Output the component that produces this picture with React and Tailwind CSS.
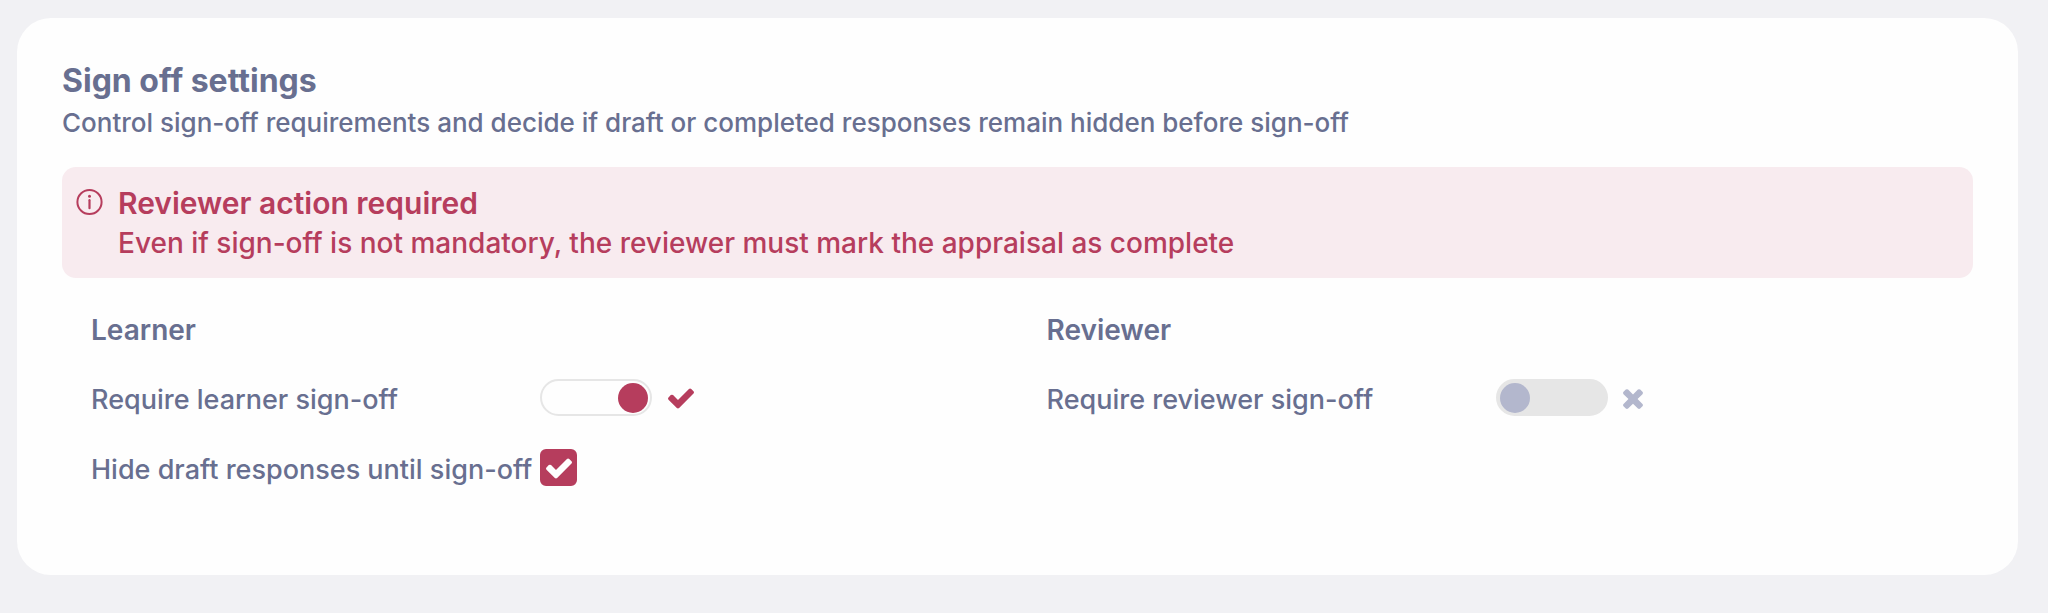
import { useState } from 'react';

const CHECK_PATH =
  'M1671 566q0 40-28 68l-724 724-136 136q-28 28-68 28t-68-28l-136-136-362-362q-28-28-28-68t28-68l136-136q28-28 68-28t68 28l294 295 656-657q28-28 68-28t68 28l136 136q28 28 28 68z';
const TIMES_PATH =
  'M1490 1322q0 40-28 68l-136 136q-28 28-68 28t-68-28l-294-294-294 294q-28 28-68 28t-68-28l-136-136q-28-28-28-68t28-68l294-294-294-294q-28-28-28-68t28-68l136-136q28-28 68-28t68 28l294 294 294-294q28-28 68-28t68 28l136 136q28 28 28 68t-28 68l-294 294 294 294q28 28 28 68z';

function Glyph({ path, className }) {
  return (
    <svg viewBox="0 0 1792 1792" fill="currentColor" aria-hidden="true" className={className}>
      <path d={path} />
    </svg>
  );
}

function InfoIcon() {
  return (
    <svg viewBox="0 0 28 28" fill="none" stroke="currentColor" aria-hidden="true" className="mt-[21px] size-7 shrink-0">
      <circle cx="13.5" cy="14" r="12.1" strokeWidth="2" />
      <path d="M13.5 12.2v8" strokeWidth="2.2" strokeLinecap="round" />
      <circle cx="13.5" cy="8.3" r="1.5" fill="currentColor" stroke="none" />
    </svg>
  );
}

function SettingRow({ id, label, children }) {
  return (
    <div className="flex h-[37px] items-center">
      <label htmlFor={id} className="w-[449px] shrink-0 whitespace-nowrap pt-1 text-[27px] leading-8 font-medium">
        {label}
      </label>
      {children}
    </div>
  );
}

function Toggle({ id, label, initial }) {
  const [on, setOn] = useState(initial);
  return (
    <SettingRow id={id} label={label}>
      <input
        id={id}
        type="checkbox"
        role="switch"
        checked={on}
        onChange={() => setOn(!on)}
        className="flex h-[37px] w-28 shrink-0 cursor-pointer appearance-none items-center rounded-full border-2 border-[#e6e6e6] bg-[#e6e6e6] px-0.5 before:size-[30px] before:rounded-full before:bg-[#b3b7cd] before:content-[''] checked:justify-end checked:bg-transparent checked:before:bg-[#b63d5d]"
      />
      <Glyph
        path={on ? CHECK_PATH : TIMES_PATH}
        className={on ? 'ml-3.5 size-[30px] text-[#b63d5d]' : 'ml-2.5 size-[30px] text-[#b3b7cd]'}
      />
    </SettingRow>
  );
}

function Checkbox({ id, label, initial }) {
  const [on, setOn] = useState(initial);
  return (
    <SettingRow id={id} label={label}>
      <span className="relative flex">
        <input
          id={id}
          type="checkbox"
          checked={on}
          onChange={() => setOn(!on)}
          className="size-[37px] cursor-pointer appearance-none rounded-md border-2 border-[#b63d5d] checked:bg-[#b63d5d]"
        />
        {on && <Glyph path={CHECK_PATH} className="pointer-events-none absolute inset-0 m-auto size-[30px] text-[#fefefe]" />}
      </span>
    </SettingRow>
  );
}

export default function App() {
  return (
    <main className="min-h-screen bg-[#f1f1f4] py-[18px] pr-[30px] pl-[17px] font-['Inter','Liberation_Sans',sans-serif] text-[#686f90]">
      <section className="rounded-[34px] bg-[#fefefe] px-[45px] pt-[43px] pb-[89px]">
        <h2 className="text-[32px] leading-[40px] font-bold">Sign off settings</h2>
        <p className="text-[26px] leading-[44px] font-medium">
          Control sign-off requirements and decide if draft or completed responses remain hidden before sign-off
        </p>
        <div role="alert" className="mt-[22px] flex gap-3.5 rounded-[14px] bg-[#f8ebef] px-3.5 text-[#b63d5d]">
          <InfoIcon />
          <div className="pt-4 pb-[15px]">
            <h3 className="text-[30px] leading-[40px] font-semibold">Reviewer action required</h3>
            <p className="text-[28px] leading-[40px] font-medium">
              Even if sign-off is not mandatory, the reviewer must mark the appraisal as complete
            </p>
          </div>
        </div>
        <div className="mt-9 grid grid-cols-2">
          <div className="flex flex-col gap-[33px] pl-[29px]">
            <h3 className="text-[28px] leading-8 font-semibold">Learner</h3>
            <Toggle id="learner-sign-off" label="Require learner sign-off" initial={true} />
            <Checkbox id="hide-draft" label="Hide draft responses until sign-off" initial={true} />
          </div>
          <div className="flex flex-col gap-[33px] pl-[29px]">
            <h3 className="text-[28px] leading-8 font-semibold">Reviewer</h3>
            <Toggle id="reviewer-sign-off" label="Require reviewer sign-off" initial={false} />
          </div>
        </div>
      </section>
    </main>
  );
}
